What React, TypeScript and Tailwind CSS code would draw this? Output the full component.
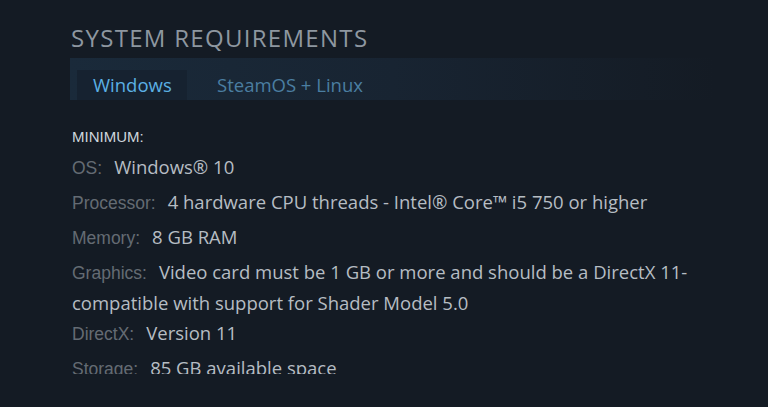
import React from "react";

const rows: { label: string; value: string; mb?: boolean }[] = [
  { label: "OS:", value: "Windows® 10" },
  { label: "Processor:", value: "4 hardware CPU threads - Intel® Core™ i5 750 or higher" },
  { label: "Memory:", value: "8 GB RAM" },
  { label: "Graphics:", value: "Video card must be 1 GB or more and should be a DirectX 11-compatible with support for Shader Model 5.0", mb: false },
  { label: "DirectX:", value: "Version 11" },
  { label: "Storage:", value: "85 GB available space" },
];

export default function App() {
  return (
    <div className="w-[768px] h-[407px] bg-[#141b24] overflow-hidden" style={{ fontFamily: '"Open Sans", sans-serif' }}>
      <div className="pl-[71px] pt-[23px]">
        <h2 className="text-[24px] leading-[30px] tracking-[1.3px] text-[#8e97a0] font-normal">SYSTEM REQUIREMENTS</h2>
      </div>
      <div className="ml-[70px] mt-[5px] w-[645px] h-[42px] flex items-end bg-gradient-to-r from-[#1a2a3a] via-[#182432] to-[#141b24]">
        <div className="ml-[7px] w-[110px] h-[30px] bg-[#162230] pl-[16px] text-[18.5px] leading-[30px] text-[#5bb0e4]">Windows</div>
        <div className="ml-[30px] h-[30px] text-[18.5px] leading-[30px] text-[#4b7ea1]">SteamOS + Linux</div>
      </div>
      <div className="ml-[72px] mr-[40px] mt-[27px] h-[247px] overflow-hidden">
        <div className="text-[15px] leading-[20px] text-[#cdd5dc]" style={{ fontFamily: '"Liberation Sans", Arial, sans-serif' }}>MINIMUM:</div>
        <ul className="mt-[5px]">
          {rows.map((r) => (
            <li key={r.label} className={`text-[18.5px] leading-[30px] text-[#b6bdc3] ${r.mb === false ? "mb-0" : "mb-[4px]"}`}>
              <span className="text-[17.5px] text-[#646b73] mr-[12px]" style={{ fontFamily: '"Liberation Sans", Arial, sans-serif' }}>{r.label}</span>
              {r.value}
            </li>
          ))}
        </ul>
      </div>
    </div>
  );
}
